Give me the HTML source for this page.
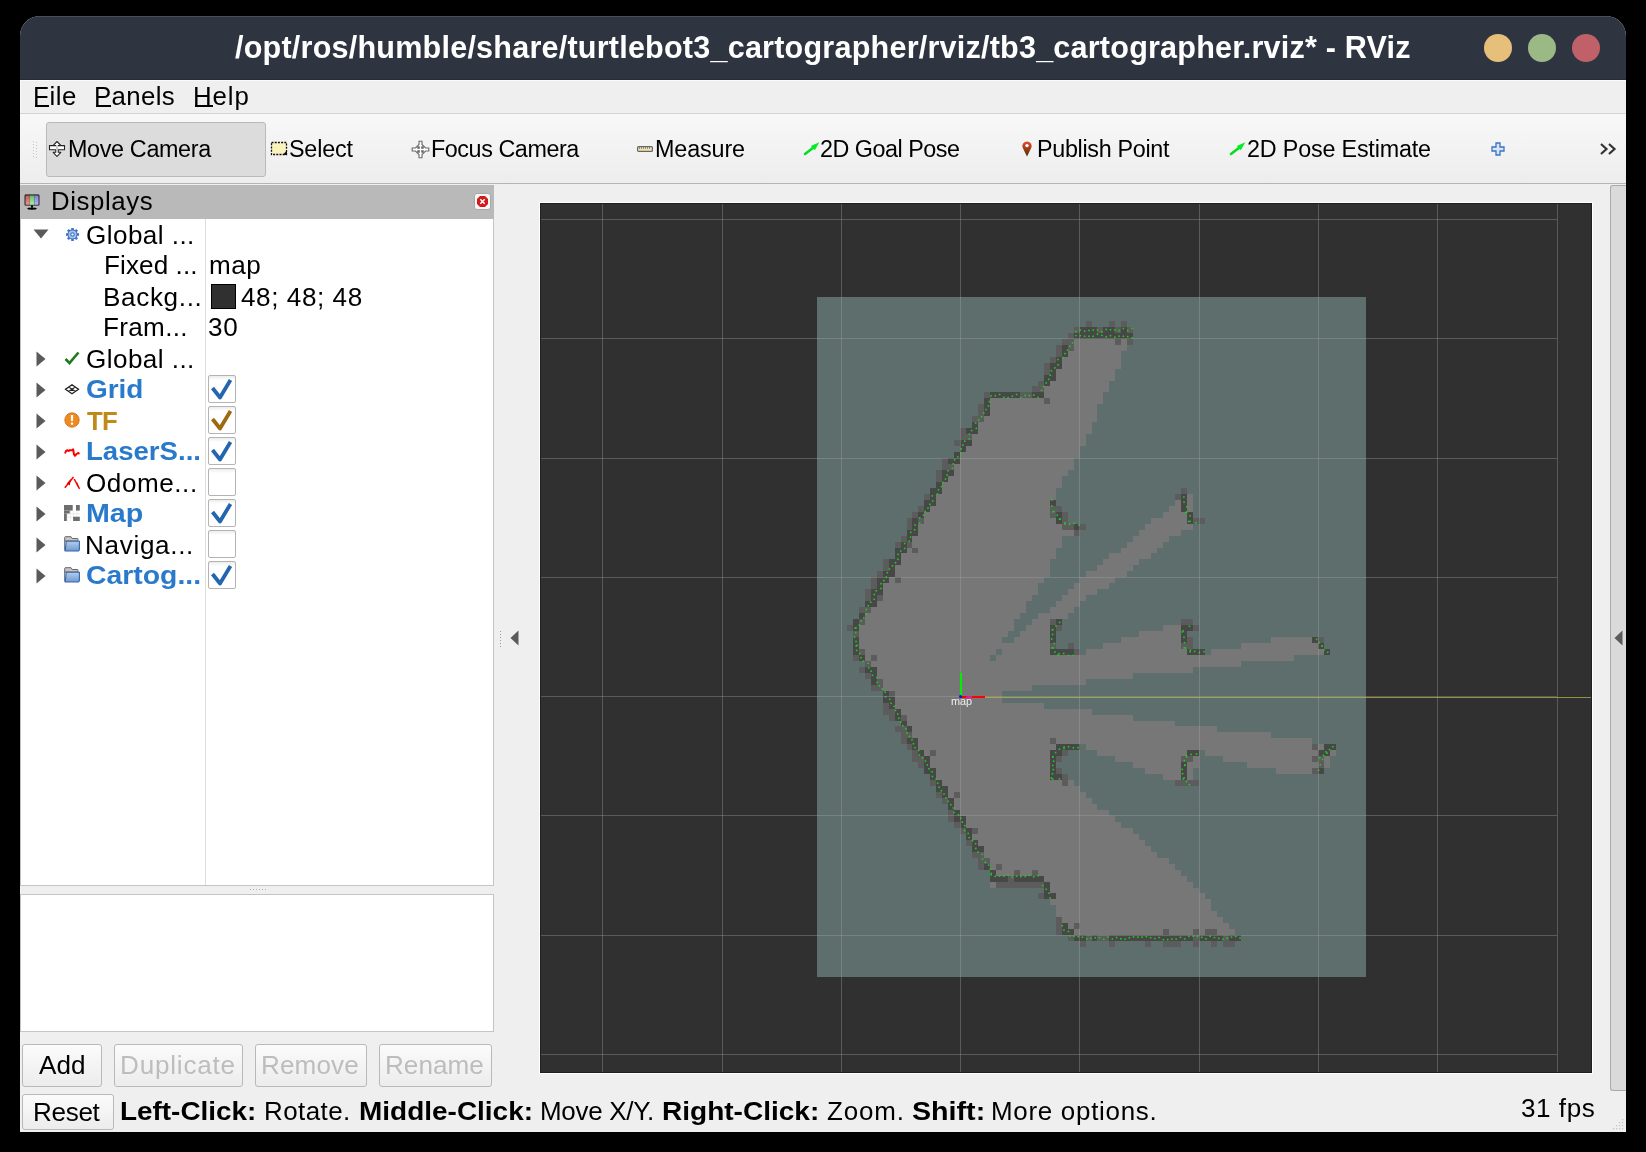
<!DOCTYPE html>
<html><head><meta charset="utf-8">
<style>
*{margin:0;padding:0;box-sizing:border-box}
html,body{width:1646px;height:1152px;background:#000;overflow:hidden;font-family:"Liberation Sans",sans-serif}
.a{position:absolute}
.t{position:absolute;white-space:nowrap;line-height:1;-webkit-font-smoothing:antialiased;will-change:transform}
</style></head><body>
<div class="a" style="left:20px;top:16px;width:1606px;height:1116px;background:#efefef;border-radius:20px 20px 0 0;overflow:hidden">
<div class="a" style="left:0;top:0;width:1606px;height:64px;background:#2e3440;border-top:1px solid #4a4e5a;border-bottom:1px solid #282c36"></div>
<div class="a" style="left:0;top:64px;width:1606px;height:1px;background:#fafafa"></div>
<div class="a" style="left:0;top:64px;width:1px;height:100px;background:linear-gradient(#fafafa,#efefef)"></div>
</div>
<div class="t" style="left:235.00px;top:32px;font-size:30.57px;letter-spacing:0.212px;color:#fff;font-weight:bold;">/opt/ros/humble/share/turtlebot3_cartographer/rviz/tb3_cartographer.rviz* - RViz</div>
<div class="a" style="left:1483.9px;top:34px;width:28px;height:28px;border-radius:50%;background:#e6c07a"></div>
<div class="a" style="left:1528px;top:34px;width:28px;height:28px;border-radius:50%;background:#9bb985"></div>
<div class="a" style="left:1572px;top:34px;width:28px;height:28px;border-radius:50%;background:#c0616a"></div>
<div class="a" style="left:20px;top:113px;width:1606px;height:1px;background:#d4d4d4"></div>
<div class="a" style="left:20px;top:114px;width:1606px;height:69px;background:linear-gradient(#f8f8f8,#ededed)"></div>
<div class="a" style="left:20px;top:183px;width:1606px;height:1px;background:#b4b4b4"></div>
<div class="t" style="left:33.20px;top:84px;font-size:25.8px;letter-spacing:0.632px;color:#000;">File</div>
<div class="t" style="left:94.20px;top:84px;font-size:25.8px;letter-spacing:0.372px;color:#000;">Panels</div>
<div class="t" style="left:193.30px;top:84px;font-size:25.8px;letter-spacing:0.939px;color:#000;">Help</div>
<div class="a" style="left:35px;top:105px;width:14px;height:2px;background:#000"></div>
<div class="a" style="left:96px;top:105px;width:15px;height:2px;background:#000"></div>
<div class="a" style="left:195px;top:105px;width:18px;height:2px;background:#000"></div>
<div class="a" style="left:33px;top:141px;width:1px;height:16px;background:repeating-linear-gradient(#c4c4c4 0 1px,transparent 1px 3px)"></div>
<div class="a" style="left:36px;top:142px;width:1px;height:16px;background:repeating-linear-gradient(#c4c4c4 0 1px,transparent 1px 3px)"></div>
<div class="a" style="left:46px;top:122px;width:220px;height:55px;background:#dcdcdc;border:1px solid #b9b9b9;border-radius:3px"></div>
<div class="t" style="left:67.60px;top:138px;font-size:23.33px;letter-spacing:-0.332px;color:#000;">Move Camera</div>
<div class="t" style="left:289.00px;top:138px;font-size:23.33px;letter-spacing:-0.191px;color:#000;">Select</div>
<div class="t" style="left:430.90px;top:138px;font-size:23.33px;letter-spacing:-0.428px;color:#000;">Focus Camera</div>
<div class="t" style="left:654.50px;top:138px;font-size:23.33px;letter-spacing:-0.115px;color:#000;">Measure</div>
<div class="t" style="left:820.40px;top:138px;font-size:23.33px;letter-spacing:-0.487px;color:#000;">2D Goal Pose</div>
<div class="t" style="left:1037.00px;top:138px;font-size:23.33px;letter-spacing:-0.307px;color:#000;">Publish Point</div>
<div class="t" style="left:1247.00px;top:138px;font-size:23.33px;letter-spacing:-0.182px;color:#000;">2D Pose Estimate</div>
<svg class="a" style="left:48px;top:140px" width="18" height="18" viewBox="0 0 18 18">
<path d="M9 1.5 L13.2 5.8 L10.2 5.8 L10.2 5.6 L16.5 5.6 L16.5 9.8 L10.2 9.8 L10.2 12.3 L12.8 12.3 L9 16.5 L5.2 12.3 L7.8 12.3 L7.8 9.8 L1.5 9.8 L1.5 5.6 L7.8 5.6 L7.8 5.8 L4.8 5.8 Z" fill="#fff" stroke="#222" stroke-width="1.1" stroke-linejoin="round"/>
<rect x="8.2" y="6" width="1.6" height="6" fill="#bdbdbd"/></svg>
<svg class="a" style="left:270px;top:141px" width="18" height="15" viewBox="0 0 18 15"><rect x="1.5" y="1.5" width="15" height="12" fill="#faf3bd" stroke="#111" stroke-width="1.3" stroke-dasharray="2 1.2"/><path d="M17 9.5 V14 H12.5 Z" fill="#111"/></svg>
<svg class="a" style="left:411px;top:140px" width="19" height="19" viewBox="0 0 19 19">
<path d="M8 1.2 H11 V4.5 L14.5 8 H17.8 V11 H14.5 L11 14.5 V17.8 H8 V14.5 L4.5 11 H1.2 V8 H4.5 L8 4.5 Z" fill="#fff" stroke="#6a6a6a" stroke-width="1.1"/><g fill="#666"><rect x="6.3" y="6.3" width="2.5" height="2.5"/><rect x="10.2" y="6.3" width="2.5" height="2.5"/><rect x="6.3" y="10.2" width="2.5" height="2.5"/><rect x="10.2" y="10.2" width="2.5" height="2.5"/></g></svg>
<svg class="a" style="left:637px;top:146px" width="16" height="6" viewBox="0 0 16 6"><rect x="0.6" y="0.6" width="14.8" height="4.8" rx="1" fill="#efe6b0" stroke="#666" stroke-width="1.2"/><path d="M2.5 1 V3 M4.5 1 V3 M6.5 1 V3 M8.5 1 V3 M10.5 1 V3 M12.5 1 V3" stroke="#777" stroke-width="0.8"/></svg>
<svg class="a" style="left:802.5px;top:141px" width="17" height="15" viewBox="0 0 17 15"><path d="M2 13 L10.5 6.5" stroke="#00e020" stroke-width="2.6" stroke-linecap="round"/><path d="M16.3 1.2 L7.8 5 L11.8 9.2 Z" fill="#00ee22"/></svg>
<svg class="a" style="left:1228.5px;top:141px" width="17" height="15" viewBox="0 0 17 15"><path d="M2 13 L10.5 6.5" stroke="#00e020" stroke-width="2.6" stroke-linecap="round"/><path d="M16.3 1.2 L7.8 5 L11.8 9.2 Z" fill="#00ee22"/></svg>
<svg class="a" style="left:1022px;top:141px" width="10" height="16" viewBox="0 0 10 16"><defs><linearGradient id="pg" x1="0" y1="0" x2="0" y2="1"><stop offset="0" stop-color="#ea4a2a"/><stop offset="1" stop-color="#4a3200"/></linearGradient></defs><path d="M5 15.5 L0.8 7 A4.6 4.6 0 1 1 9.2 7 Z" fill="url(#pg)"/><circle cx="5" cy="4.6" r="1.7" fill="#fff"/></svg>
<svg class="a" style="left:1491px;top:142px" width="14" height="14" viewBox="0 0 14 14"><path d="M5 1 H9 V5 H13 V9 H9 V13 H5 V9 H1 V5 H5 Z" fill="#d8e6f7" stroke="#3b73c0" stroke-width="1.3"/></svg>
<svg class="a" style="left:1598px;top:141px" width="22" height="16" viewBox="0 0 22 16"><path d="M3 3 L8.5 8 L3 13 M11 3 L16.5 8 L11 13" fill="none" stroke="#333" stroke-width="2.2"/></svg>
<div class="a" style="left:20px;top:185px;width:474px;height:34px;background:#b9b9b9"></div>
<div class="t" style="left:51.20px;top:189px;font-size:25.8px;letter-spacing:0.581px;color:#000;">Displays</div>
<svg class="a" style="left:24px;top:194px" width="16" height="16" viewBox="0 0 16 16"><defs><linearGradient id="dr" x1="0" y1="0" x2="0" y2="1"><stop offset="0" stop-color="#b86060"/><stop offset="1" stop-color="#f09090"/></linearGradient><linearGradient id="dg" x1="0" y1="0" x2="0" y2="1"><stop offset="0" stop-color="#6ab86a"/><stop offset="1" stop-color="#a8f0a0"/></linearGradient><linearGradient id="db" x1="0" y1="0" x2="0" y2="1"><stop offset="0" stop-color="#8080d8"/><stop offset="1" stop-color="#b4b4ff"/></linearGradient></defs>
<rect x="0.6" y="0.6" width="14.8" height="11" rx="1.2" fill="#000"/><rect x="1.4" y="1.4" width="4.4" height="9.4" fill="url(#dr)"/><rect x="5.8" y="1.4" width="4.8" height="9.4" fill="url(#dg)"/><rect x="10.6" y="1.4" width="4" height="9.4" fill="url(#db)"/>
<rect x="7" y="11.5" width="2" height="2" fill="#000"/><ellipse cx="8" cy="14.6" rx="4.8" ry="1.2" fill="#000"/></svg>
<div class="a" style="left:474px;top:193px;width:17px;height:17px;background:#f7f7f7;border:1px solid #a8a8a8;border-radius:3px"></div>
<svg class="a" style="left:476px;top:195px" width="13" height="13" viewBox="0 0 13 13"><path d="M4 1 H9 L12 4 V9 L9 12 H4 L1 9 V4 Z" fill="#d21a1a"/><path d="M4.3 4.3 L8.7 8.7 M8.7 4.3 L4.3 8.7" stroke="#fff" stroke-width="1.5"/></svg>
<div class="a" style="left:20px;top:219px;width:474px;height:667px;background:#fff;border:1px solid #c4c4c4;border-top:none"></div>
<div class="a" style="left:205px;top:219px;width:1px;height:666px;background:#dcdcdc"></div>
<div class="t" style="left:85.90px;top:222px;font-size:26.09px;letter-spacing:0.442px;color:#000;">Global ...</div>
<div class="a" style="left:64px;top:226px;width:16px;height:16px"><svg width="16" height="16" viewBox="0 0 16 16"><g fill="#3d72c4"><circle cx="8.5" cy="8.5" r="5"/><rect x="7.2" y="2" width="2.6" height="13"/><rect x="2" y="7.2" width="13" height="2.6"/><rect x="7.2" y="2" width="2.6" height="13" transform="rotate(45 8.5 8.5)"/><rect x="7.2" y="2" width="2.6" height="13" transform="rotate(-45 8.5 8.5)"/></g><circle cx="8.5" cy="8.5" r="4" fill="#a9c3e8"/><circle cx="8.5" cy="8.5" r="2.3" fill="#4a7cc8"/><circle cx="8.5" cy="8.5" r="1.1" fill="#fff"/></svg></div>
<svg class="a" style="left:33px;top:229px" width="16" height="10" viewBox="0 0 16 10"><path d="M0.5 0.5 H15.5 L8 9.5 Z" fill="#5a5a5a"/></svg>
<div class="t" style="left:103.70px;top:252px;font-size:26.09px;letter-spacing:0.099px;color:#000;">Fixed ...</div>
<div class="t" style="left:103.00px;top:284px;font-size:26.09px;letter-spacing:0.661px;color:#000;">Backg...</div>
<div class="t" style="left:103.00px;top:314px;font-size:26.09px;letter-spacing:0.328px;color:#000;">Fram...</div>
<div class="t" style="left:85.90px;top:346px;font-size:26.09px;letter-spacing:0.442px;color:#000;">Global ...</div>
<div class="a" style="left:64px;top:350px;width:16px;height:16px"><svg width="16" height="16" viewBox="0 0 16 16"><path d="M1.5 9 L5.5 13 L14.5 2.5" fill="none" stroke="#1d7a1d" stroke-width="2.6"/></svg></div>
<svg class="a" style="left:36px;top:351px" width="10" height="16" viewBox="0 0 10 16"><path d="M0.5 0.5 V15.5 L9.5 8 Z" fill="#5a5a5a"/></svg>
<div class="t" style="left:85.90px;top:377px;font-size:25.71px;transform:scaleX(1.087);transform-origin:0 0;color:#2a7acb;font-weight:bold;">Grid</div>
<div class="a" style="left:64px;top:381px;width:16px;height:16px"><svg width="16" height="16" viewBox="0 0 16 16"><path d="M8 3.8 L14.5 8.3 L8 12.8 L1.5 8.3 Z M4.75 6.05 L11.25 10.55 M11.25 6.05 L4.75 10.55" fill="none" stroke="#222" stroke-width="1.3"/></svg></div>
<svg class="a" style="left:36px;top:382px" width="10" height="16" viewBox="0 0 10 16"><path d="M0.5 0.5 V15.5 L9.5 8 Z" fill="#5a5a5a"/></svg>
<div class="a" style="left:208px;top:375px;width:28px;height:28px;border:1px solid #b4b4b4;border-radius:2px;background:linear-gradient(#ececec,#fff 4px)"></div>
<svg class="a" style="left:208px;top:375px" width="28" height="28" viewBox="0 0 28 28"><path d="M4.5 13 L12 22.5 L22.5 5" fill="none" stroke="#2365ae" stroke-width="3.8" stroke-linejoin="round"/></svg>
<div class="t" style="left:86.90px;top:409px;font-size:25.71px;letter-spacing:-0.601px;color:#c08a1a;font-weight:bold;">TF</div>
<div class="a" style="left:64px;top:412px;width:16px;height:16px"><svg width="16" height="16" viewBox="0 0 16 16"><circle cx="8" cy="8" r="7.2" fill="#f0891e" stroke="#c86a10" stroke-width="0.8"/><rect x="6.9" y="3" width="2.2" height="6" fill="#fff"/><rect x="6.9" y="10.5" width="2.2" height="2.2" fill="#fff"/></svg></div>
<svg class="a" style="left:36px;top:413px" width="10" height="16" viewBox="0 0 10 16"><path d="M0.5 0.5 V15.5 L9.5 8 Z" fill="#5a5a5a"/></svg>
<div class="a" style="left:208px;top:406px;width:28px;height:28px;border:1px solid #b4b4b4;border-radius:2px;background:linear-gradient(#ececec,#fff 4px)"></div>
<svg class="a" style="left:208px;top:406px" width="28" height="28" viewBox="0 0 28 28"><path d="M4.5 13 L12 22.5 L22.5 5" fill="none" stroke="#9b6b0e" stroke-width="3.8" stroke-linejoin="round"/></svg>
<div class="t" style="left:85.90px;top:439px;font-size:25.71px;transform:scaleX(1.0732);transform-origin:0 0;color:#2a7acb;font-weight:bold;">LaserS...</div>
<div class="a" style="left:64px;top:443px;width:16px;height:16px"><svg width="16" height="16" viewBox="0 0 16 16"><path d="M1 10.5 L2 8 L3.5 7.2 L4.5 8 L6 7.2 L8 7.2 L9.2 6.3 L10 11.5 L11 12.8 L12.5 11 L14 10 L15.5 10.8" fill="none" stroke="#ff0000" stroke-width="2" stroke-linejoin="round"/></svg></div>
<svg class="a" style="left:36px;top:444px" width="10" height="16" viewBox="0 0 10 16"><path d="M0.5 0.5 V15.5 L9.5 8 Z" fill="#5a5a5a"/></svg>
<div class="a" style="left:208px;top:437px;width:28px;height:28px;border:1px solid #b4b4b4;border-radius:2px;background:linear-gradient(#ececec,#fff 4px)"></div>
<svg class="a" style="left:208px;top:437px" width="28" height="28" viewBox="0 0 28 28"><path d="M4.5 13 L12 22.5 L22.5 5" fill="none" stroke="#2365ae" stroke-width="3.8" stroke-linejoin="round"/></svg>
<div class="t" style="left:85.90px;top:470px;font-size:26.09px;letter-spacing:0.556px;color:#000;">Odome...</div>
<div class="a" style="left:64px;top:474px;width:16px;height:16px"><svg width="16" height="16" viewBox="0 0 16 16"><path d="M0.8 13.8 L9.5 3 M10.2 5 L15.5 14.8" fill="none" stroke="#ff0000" stroke-width="1.5"/><path d="M7 4.8 L2.8 9.6 L5.8 11.4 Z M12.2 9.2 L15.8 15.6 L13.4 8.4 Z" fill="#e00000"/></svg></div>
<svg class="a" style="left:36px;top:475px" width="10" height="16" viewBox="0 0 10 16"><path d="M0.5 0.5 V15.5 L9.5 8 Z" fill="#5a5a5a"/></svg>
<div class="a" style="left:208px;top:468px;width:28px;height:28px;border:1px solid #b4b4b4;border-radius:2px;background:linear-gradient(#ececec,#fff 4px)"></div>
<div class="t" style="left:85.90px;top:501px;font-size:25.71px;transform:scaleX(1.1146);transform-origin:0 0;color:#2a7acb;font-weight:bold;">Map</div>
<div class="a" style="left:64px;top:505px;width:16px;height:16px"><svg width="16" height="16" viewBox="0 0 16 16"><rect x="0" y="0" width="16" height="16" fill="#fff"/><path d="M3.2 6 V16 M6.4 6 V16 M9.6 6 V16 M12.8 6 V16 M0 8.8 H16 M0 12 H16" stroke="#ddd" stroke-width="0.6"/><g fill="#6e6e6e"><rect x="0" y="0" width="8.7" height="5.6"/><rect x="0" y="5.6" width="5.8" height="2.9"/><rect x="0" y="8.5" width="2.8" height="7.5"/><rect x="12" y="0" width="3.8" height="5.6"/><rect x="9.1" y="11.8" width="6.7" height="4.2"/></g></svg></div>
<svg class="a" style="left:36px;top:506px" width="10" height="16" viewBox="0 0 10 16"><path d="M0.5 0.5 V15.5 L9.5 8 Z" fill="#5a5a5a"/></svg>
<div class="a" style="left:208px;top:499px;width:28px;height:28px;border:1px solid #b4b4b4;border-radius:2px;background:linear-gradient(#ececec,#fff 4px)"></div>
<svg class="a" style="left:208px;top:499px" width="28" height="28" viewBox="0 0 28 28"><path d="M4.5 13 L12 22.5 L22.5 5" fill="none" stroke="#2365ae" stroke-width="3.8" stroke-linejoin="round"/></svg>
<div class="t" style="left:84.90px;top:532px;font-size:26.09px;letter-spacing:0.679px;color:#000;">Naviga...</div>
<div class="a" style="left:64px;top:536px;width:16px;height:16px"><svg width="16" height="16" viewBox="0 0 16 16"><defs><linearGradient id="fb" x1="0" y1="0" x2="0" y2="1"><stop offset="0" stop-color="#b6cdec"/><stop offset="1" stop-color="#6d9ad4"/></linearGradient></defs><path d="M0.7 14.5 V1.5 Q0.7 0.7 1.5 0.7 H7 L8.3 2.5 H13.5 Q14 2.5 14 3.2 V5 H0.7" fill="#c4c4c4" stroke="#666" stroke-width="1"/><path d="M2.2 5.2 H15.4 V13.8 L14.5 15 H1.2 Z" fill="url(#fb)" stroke="#3465aa" stroke-width="1.1"/></svg></div>
<svg class="a" style="left:36px;top:537px" width="10" height="16" viewBox="0 0 10 16"><path d="M0.5 0.5 V15.5 L9.5 8 Z" fill="#5a5a5a"/></svg>
<div class="a" style="left:208px;top:530px;width:28px;height:28px;border:1px solid #b4b4b4;border-radius:2px;background:linear-gradient(#ececec,#fff 4px)"></div>
<div class="t" style="left:85.90px;top:563px;font-size:25.71px;transform:scaleX(1.1038);transform-origin:0 0;color:#2a7acb;font-weight:bold;">Cartog...</div>
<div class="a" style="left:64px;top:567px;width:16px;height:16px"><svg width="16" height="16" viewBox="0 0 16 16"><defs><linearGradient id="fb" x1="0" y1="0" x2="0" y2="1"><stop offset="0" stop-color="#b6cdec"/><stop offset="1" stop-color="#6d9ad4"/></linearGradient></defs><path d="M0.7 14.5 V1.5 Q0.7 0.7 1.5 0.7 H7 L8.3 2.5 H13.5 Q14 2.5 14 3.2 V5 H0.7" fill="#c4c4c4" stroke="#666" stroke-width="1"/><path d="M2.2 5.2 H15.4 V13.8 L14.5 15 H1.2 Z" fill="url(#fb)" stroke="#3465aa" stroke-width="1.1"/></svg></div>
<svg class="a" style="left:36px;top:568px" width="10" height="16" viewBox="0 0 10 16"><path d="M0.5 0.5 V15.5 L9.5 8 Z" fill="#5a5a5a"/></svg>
<div class="a" style="left:208px;top:561px;width:28px;height:28px;border:1px solid #b4b4b4;border-radius:2px;background:linear-gradient(#ececec,#fff 4px)"></div>
<svg class="a" style="left:208px;top:561px" width="28" height="28" viewBox="0 0 28 28"><path d="M4.5 13 L12 22.5 L22.5 5" fill="none" stroke="#2365ae" stroke-width="3.8" stroke-linejoin="round"/></svg>
<div class="t" style="left:208.70px;top:252px;font-size:26.09px;letter-spacing:0.537px;color:#000;">map</div>
<div class="a" style="left:211px;top:284px;width:25px;height:25px;background:#303030;border:1px solid #000"></div>
<div class="t" style="left:240.80px;top:284px;font-size:26.09px;letter-spacing:0.578px;color:#000;">48; 48; 48</div>
<div class="t" style="left:208.00px;top:314px;font-size:26.09px;letter-spacing:0.797px;color:#000;">30</div>
<div class="a" style="left:250px;top:889px;width:18px;height:1px;background:repeating-linear-gradient(90deg,#b0b0b0 0 1px,transparent 1px 3px)"></div>
<div class="a" style="left:20px;top:894px;width:474px;height:138px;background:#fff;border:1px solid #c4c4c4"></div>
<div class="a" style="left:22px;top:1044px;width:80px;height:43px;border:1px solid #b9b9b9;border-radius:3px;background:linear-gradient(#fbfbfb,#ececec)"></div>
<div class="a" style="left:114px;top:1044px;width:129px;height:43px;border:1px solid #b9b9b9;border-radius:3px;background:linear-gradient(#fbfbfb,#ececec)"></div>
<div class="a" style="left:255px;top:1044px;width:112px;height:43px;border:1px solid #b9b9b9;border-radius:3px;background:linear-gradient(#fbfbfb,#ececec)"></div>
<div class="a" style="left:379px;top:1044px;width:113px;height:43px;border:1px solid #b9b9b9;border-radius:3px;background:linear-gradient(#fbfbfb,#ececec)"></div>
<div class="t" style="left:39.40px;top:1052px;font-size:26.09px;letter-spacing:0.001px;color:#000;">Add</div>
<div class="t" style="left:120.00px;top:1052px;font-size:26.09px;letter-spacing:0.798px;color:#bdbdbd;">Duplicate</div>
<div class="t" style="left:261.40px;top:1052px;font-size:26.09px;letter-spacing:0.12px;color:#bdbdbd;">Remove</div>
<div class="t" style="left:385.10px;top:1052px;font-size:26.09px;letter-spacing:0.027px;color:#bdbdbd;">Rename</div>
<div class="a" style="left:22px;top:1094px;width:92px;height:36px;border:1px solid #b9b9b9;border-radius:3px;background:linear-gradient(#fbfbfb,#ececec)"></div>
<div class="t" style="left:33.10px;top:1099px;font-size:26.09px;letter-spacing:-0.32px;color:#000;">Reset</div>
<div class="t" style="left:1521.30px;top:1095px;font-size:26.09px;letter-spacing:0.54px;color:#000;">31 fps</div>
<div class="t" style="left:120.40px;top:1099px;font-size:25.57px;transform:scaleX(1.0909);transform-origin:0 0;color:#000;font-weight:bold;">Left-Click:</div>
<div class="t" style="left:264.40px;top:1099px;font-size:25.94px;letter-spacing:0.447px;color:#000;">Rotate.</div>
<div class="t" style="left:359.00px;top:1099px;font-size:25.57px;transform:scaleX(1.0942);transform-origin:0 0;color:#000;font-weight:bold;">Middle-Click:</div>
<div class="t" style="left:539.80px;top:1099px;font-size:25.94px;letter-spacing:-0.262px;color:#000;">Move X/Y.</div>
<div class="t" style="left:662.00px;top:1099px;font-size:25.57px;transform:scaleX(1.0964);transform-origin:0 0;color:#000;font-weight:bold;">Right-Click:</div>
<div class="t" style="left:827.00px;top:1099px;font-size:25.94px;letter-spacing:0.85px;color:#000;">Zoom.</div>
<div class="t" style="left:911.50px;top:1099px;font-size:25.57px;transform:scaleX(1.1208);transform-origin:0 0;color:#000;font-weight:bold;">Shift:</div>
<div class="t" style="left:991.00px;top:1099px;font-size:25.94px;letter-spacing:0.713px;color:#000;">More options.</div>
<div class="a" style="left:500px;top:631px;width:1px;height:17px;background:repeating-linear-gradient(#9a9a9a 0 1px,transparent 1px 3px)"></div>
<svg class="a" style="left:510px;top:630px" width="9" height="16" viewBox="0 0 9 16"><path d="M8.5 0.5 V15.5 L0.5 8 Z" fill="#5a5a5a"/></svg>
<svg class="a" style="left:1612px;top:1118px" width="13" height="13" viewBox="0 0 13 13"><g fill="#c4c4c4"><rect x="10" y="1" width="1.2" height="1.2"/><rect x="7" y="4" width="1.2" height="1.2"/><rect x="10" y="4" width="1.2" height="1.2"/><rect x="4" y="7" width="1.2" height="1.2"/><rect x="7" y="7" width="1.2" height="1.2"/><rect x="10" y="7" width="1.2" height="1.2"/><rect x="1" y="10" width="1.2" height="1.2"/><rect x="4" y="10" width="1.2" height="1.2"/><rect x="7" y="10" width="1.2" height="1.2"/><rect x="10" y="10" width="1.2" height="1.2"/></g></svg>
<div class="a" style="left:1610px;top:185px;width:16px;height:906px;background:#dadada;border:1px solid #a9a9a9;border-right:none;border-radius:3px 0 0 3px"></div>
<svg class="a" style="left:1614px;top:630px" width="9" height="16" viewBox="0 0 9 16"><path d="M8.5 0.5 V15.5 L0.5 8 Z" fill="#5a5a5a"/></svg>
<div class="a" style="left:539px;top:202px;width:1054px;height:872px;background:#fff"></div>
<div class="a" style="left:540px;top:203px;width:1052px;height:870px;background:#303030;overflow:hidden"></div>
<svg class="a" style="left:817px;top:297px" width="549.00" height="680.00" viewBox="0 0 92 114" preserveAspectRatio="none" shape-rendering="crispEdges">
<rect width="92" height="114" fill="#5d6e6c"/>
<path fill="#777777" d="M43 7h7v1h-7zM51 7h1v1h-1zM43 8h9v1h-9zM42 9h9v1h-9zM41 10h10v1h-10zM41 11h10v1h-10zM40 12h10v1h-10zM40 13h10v1h-10zM39 14h10v1h-10zM38 15h11v1h-11zM38 16h10v1h-10zM29 17h9v1h-9zM39 17h9v1h-9zM29 18h18v1h-18zM29 19h18v1h-18zM28 20h19v1h-19zM27 21h19v1h-19zM27 22h19v1h-19zM26 23h19v1h-19zM26 24h19v1h-19zM25 25h19v1h-19zM24 26h20v1h-20zM24 27h19v1h-19zM23 28h20v1h-20zM23 29h19v1h-19zM22 30h19v1h-19zM21 31h20v1h-20zM21 32h19v1h-19zM20 33h20v1h-20zM62 33h1v1h-1zM20 34h19v1h-19zM60 34h1v1h-1zM62 34h1v1h-1zM19 35h20v1h-20zM59 35h2v1h-2zM62 35h1v1h-1zM18 36h21v1h-21zM58 36h4v1h-4zM18 37h22v1h-22zM56 37h6v1h-6zM17 38h24v1h-24zM55 38h8v1h-8zM17 39h26v1h-26zM54 39h7v1h-7zM16 40h25v1h-25zM53 40h6v1h-6zM16 41h25v1h-25zM52 41h6v1h-6zM15 42h1v1h-1zM17 42h23v1h-23zM51 42h6v1h-6zM14 43h26v1h-26zM49 43h7v1h-7zM14 44h25v1h-25zM48 44h6v1h-6zM13 45h26v1h-26zM47 45h6v1h-6zM13 46h26v1h-26zM45 46h7v1h-7zM12 47h1v1h-1zM14 47h24v1h-24zM44 47h6v1h-6zM11 48h26v1h-26zM43 48h6v1h-6zM11 49h26v1h-26zM42 49h5v1h-5zM11 50h25v1h-25zM41 50h4v1h-4zM10 51h25v1h-25zM40 51h4v1h-4zM9 52h26v1h-26zM39 52h4v1h-4zM8 53h26v1h-26zM37 53h5v1h-5zM8 54h25v1h-25zM36 54h3v1h-3zM7 55h26v1h-26zM35 55h4v1h-4zM58 55h3v1h-3zM7 56h25v1h-25zM34 56h5v1h-5zM54 56h7v1h-7zM7 57h24v1h-24zM33 57h6v1h-6zM51 57h10v1h-10zM76 57h7v1h-7zM7 58h32v1h-32zM48 58h13v1h-13zM71 58h13v1h-13zM8 59h22v1h-22zM31 59h8v1h-8zM45 59h17v1h-17zM66 59h19v1h-19zM8 60h1v1h-1zM10 60h19v1h-19zM30 60h50v1h-50zM9 61h62v1h-62zM10 62h53v1h-53zM10 63h43v1h-43zM11 64h34v1h-34zM11 65h25v1h-25zM13 66h18v1h-18zM13 67h18v1h-18zM13 68h25v1h-25zM14 69h32v1h-32zM15 70h38v1h-38zM15 71h45v1h-45zM16 72h51v1h-51zM16 73h60v1h-60zM17 74h22v1h-22zM40 74h43v1h-43zM17 75h23v1h-23zM45 75h38v1h-38zM84 75h1v1h-1zM18 76h1v1h-1zM20 76h19v1h-19zM47 76h15v1h-15zM65 76h19v1h-19zM86 76h1v1h-1zM19 77h20v1h-20zM50 77h11v1h-11zM63 77h1v1h-1zM68 77h15v1h-15zM85 77h1v1h-1zM19 78h20v1h-20zM53 78h8v1h-8zM62 78h2v1h-2zM72 78h12v1h-12zM85 78h1v1h-1zM20 79h19v1h-19zM55 79h6v1h-6zM62 79h1v1h-1zM77 79h6v1h-6zM20 80h19v1h-19zM58 80h3v1h-3zM62 80h1v1h-1zM21 81h20v1h-20zM42 81h1v1h-1zM22 82h22v1h-22zM22 83h1v1h-1zM24 83h21v1h-21zM23 84h23v1h-23zM23 85h24v1h-24zM24 86h25v1h-25zM25 87h25v1h-25zM25 88h26v1h-26zM27 89h26v1h-26zM26 90h28v1h-28zM27 91h28v1h-28zM28 92h28v1h-28zM28 93h29v1h-29zM29 94h30v1h-30zM29 95h1v1h-1zM31 95h29v1h-29zM30 96h3v1h-3zM34 96h2v1h-2zM37 96h24v1h-24zM38 97h24v1h-24zM29 98h1v1h-1zM39 98h24v1h-24zM39 99h25v1h-25zM40 100h25v1h-25zM39 101h27v1h-27zM40 102h26v1h-26zM40 103h27v1h-27zM41 104h27v1h-27zM42 105h1v1h-1zM44 105h25v1h-25zM43 106h15v1h-15zM59 106h4v1h-4zM64 106h1v1h-1zM67 106h3v1h-3z"/>
<path fill="#5c5c5c" d="M45 4h1v1h-1zM49 4h1v1h-1zM51 4h1v1h-1zM43 5h1v1h-1zM47 5h1v1h-1zM50 5h1v1h-1zM52 5h1v1h-1zM42 6h1v1h-1zM41 7h2v1h-2zM50 7h1v1h-1zM52 7h1v1h-1zM40 8h1v1h-1zM42 8h1v1h-1zM40 9h1v1h-1zM39 10h1v1h-1zM38 11h1v1h-1zM38 12h1v1h-1zM37 14h1v1h-1zM36 15h2v1h-2zM28 16h1v1h-1zM34 16h2v1h-2zM38 17h1v1h-1zM27 18h1v1h-1zM27 19h1v1h-1zM26 20h2v1h-2zM24 22h1v1h-1zM24 23h2v1h-2zM23 24h1v1h-1zM21 27h1v1h-1zM21 28h2v1h-2zM20 29h1v1h-1zM20 30h1v1h-1zM61 32h1v1h-1zM18 33h1v1h-1zM60 33h1v1h-1zM17 35h1v1h-1zM39 35h2v1h-2zM16 36h1v1h-1zM39 36h1v1h-1zM41 36h1v1h-1zM15 37h1v1h-1zM17 37h1v1h-1zM41 37h1v1h-1zM63 37h2v1h-2zM15 38h1v1h-1zM41 38h2v1h-2zM44 38h1v1h-1zM43 39h1v1h-1zM14 40h1v1h-1zM13 41h1v1h-1zM15 41h1v1h-1zM16 42h1v1h-1zM11 44h1v1h-1zM11 45h1v1h-1zM10 46h1v1h-1zM9 47h1v1h-1zM13 47h1v1h-1zM9 48h1v1h-1zM8 49h1v1h-1zM8 50h1v1h-1zM10 50h1v1h-1zM7 52h2v1h-2zM7 54h1v1h-1zM39 54h1v1h-1zM61 54h2v1h-2zM5 55h1v1h-1zM40 55h1v1h-1zM63 55h1v1h-1zM6 56h1v1h-1zM62 57h1v1h-1zM84 57h1v1h-1zM39 58h1v1h-1zM42 58h1v1h-1zM61 58h2v1h-2zM7 59h1v1h-1zM43 59h1v1h-1zM6 60h1v1h-1zM9 60h1v1h-1zM8 61h1v1h-1zM7 62h1v1h-1zM8 63h1v1h-1zM10 64h1v1h-1zM9 65h2v1h-2zM12 66h1v1h-1zM11 68h1v1h-1zM11 69h2v1h-2zM12 70h1v1h-1zM14 70h1v1h-1zM13 72h2v1h-2zM14 73h2v1h-2zM14 74h1v1h-1zM39 74h1v1h-1zM15 75h1v1h-1zM83 75h1v1h-1zM16 76h1v1h-1zM19 76h1v1h-1zM41 76h1v1h-1zM16 77h2v1h-2zM40 77h1v1h-1zM61 77h2v1h-2zM83 77h2v1h-2zM17 78h1v1h-1zM84 78h1v1h-1zM40 79h1v1h-1zM83 79h1v1h-1zM41 80h1v1h-1zM19 81h1v1h-1zM41 81h1v1h-1zM60 81h4v1h-4zM20 83h1v1h-1zM23 83h1v1h-1zM21 84h1v1h-1zM22 86h1v1h-1zM22 87h1v1h-1zM23 88h1v1h-1zM24 89h1v1h-1zM26 89h1v1h-1zM25 91h1v1h-1zM26 93h2v1h-2zM27 94h2v1h-2zM27 95h1v1h-1zM30 95h1v1h-1zM33 96h1v1h-1zM36 96h1v1h-1zM32 97h1v1h-1zM30 98h8v1h-8zM37 100h1v1h-1zM40 104h1v1h-1zM40 105h1v1h-1zM43 105h1v1h-1zM40 106h1v1h-1zM58 106h1v1h-1zM63 106h1v1h-1zM65 106h2v1h-2zM42 107h1v1h-1zM45 107h1v1h-1zM47 107h2v1h-2zM63 107h1v1h-1zM68 107h1v1h-1zM44 108h1v1h-1zM49 108h1v1h-1zM55 108h1v1h-1zM58 108h3v1h-3zM63 108h1v1h-1zM66 108h1v1h-1zM68 108h2v1h-2z"/>
<path fill="#474747" d="M44 5h3v1h-3zM48 5h2v1h-2zM51 5h1v1h-1zM43 6h10v1h-10zM41 8h1v1h-1zM41 9h1v1h-1zM40 10h1v1h-1zM39 11h2v1h-2zM39 12h1v1h-1zM38 13h2v1h-2zM38 14h1v1h-1zM29 16h5v1h-5zM36 16h2v1h-2zM28 17h1v1h-1zM28 18h1v1h-1zM28 19h1v1h-1zM26 21h1v1h-1zM25 22h2v1h-2zM24 24h2v1h-2zM24 25h1v1h-1zM23 26h1v1h-1zM22 27h2v1h-2zM21 29h2v1h-2zM21 30h1v1h-1zM20 31h1v1h-1zM19 32h2v1h-2zM19 33h1v1h-1zM61 33h1v1h-1zM18 34h2v1h-2zM39 34h1v1h-1zM61 34h1v1h-1zM18 35h1v1h-1zM61 35h1v1h-1zM17 36h1v1h-1zM40 36h1v1h-1zM62 36h1v1h-1zM16 37h1v1h-1zM40 37h1v1h-1zM62 37h1v1h-1zM16 38h1v1h-1zM43 38h1v1h-1zM15 39h2v1h-2zM15 40h1v1h-1zM14 41h1v1h-1zM13 42h2v1h-2zM13 43h1v1h-1zM12 44h2v1h-2zM12 45h1v1h-1zM11 46h2v1h-2zM10 47h2v1h-2zM10 48h1v1h-1zM9 49h2v1h-2zM9 50h1v1h-1zM8 51h2v1h-2zM7 53h1v1h-1zM6 54h1v1h-1zM40 54h1v1h-1zM6 55h1v1h-1zM39 55h1v1h-1zM61 55h2v1h-2zM39 56h1v1h-1zM61 56h1v1h-1zM6 57h1v1h-1zM39 57h1v1h-1zM61 57h1v1h-1zM83 57h1v1h-1zM6 58h1v1h-1zM84 58h1v1h-1zM6 59h1v1h-1zM39 59h4v1h-4zM62 59h3v1h-3zM85 59h1v1h-1zM7 60h1v1h-1zM8 62h2v1h-2zM9 63h1v1h-1zM9 64h1v1h-1zM11 66h1v1h-1zM11 67h2v1h-2zM12 68h1v1h-1zM13 69h1v1h-1zM13 70h1v1h-1zM14 71h1v1h-1zM15 72h1v1h-1zM15 74h2v1h-2zM16 75h1v1h-1zM40 75h4v1h-4zM85 75h2v1h-2zM17 76h1v1h-1zM39 76h2v1h-2zM62 76h2v1h-2zM84 76h2v1h-2zM18 77h1v1h-1zM39 77h1v1h-1zM18 78h1v1h-1zM39 78h1v1h-1zM61 78h1v1h-1zM18 79h2v1h-2zM39 79h1v1h-1zM61 79h1v1h-1zM84 79h1v1h-1zM19 80h1v1h-1zM39 80h2v1h-2zM61 80h1v1h-1zM20 81h1v1h-1zM20 82h2v1h-2zM21 83h1v1h-1zM22 84h1v1h-1zM22 85h1v1h-1zM23 86h1v1h-1zM23 87h2v1h-2zM24 88h1v1h-1zM25 89h1v1h-1zM25 90h1v1h-1zM26 91h1v1h-1zM26 92h2v1h-2zM28 95h1v1h-1zM29 96h1v1h-1zM29 97h3v1h-3zM33 97h5v1h-5zM38 98h1v1h-1zM38 99h1v1h-1zM38 100h2v1h-2zM41 105h1v1h-1zM41 106h2v1h-2zM43 107h2v1h-2zM46 107h1v1h-1zM49 107h14v1h-14zM64 107h4v1h-4zM69 107h2v1h-2z"/>
<g fill="#19d219" shape-rendering="auto"><rect x="43.27" y="5.66" width="0.26" height="0.26"/><rect x="43.99" y="5.41" width="0.26" height="0.26"/><rect x="44.72" y="5.59" width="0.26" height="0.26"/><rect x="45.44" y="5.49" width="0.26" height="0.26"/><rect x="46.16" y="5.41" width="0.26" height="0.26"/><rect x="46.88" y="5.40" width="0.26" height="0.26"/><rect x="47.60" y="5.70" width="0.26" height="0.26"/><rect x="48.33" y="5.31" width="0.26" height="0.26"/><rect x="49.05" y="5.36" width="0.26" height="0.26"/><rect x="49.77" y="5.39" width="0.26" height="0.26"/><rect x="50.49" y="5.49" width="0.26" height="0.26"/><rect x="51.21" y="5.14" width="0.26" height="0.26"/><rect x="51.94" y="5.49" width="0.26" height="0.26"/><rect x="52.66" y="5.13" width="0.26" height="0.26"/><rect x="43.27" y="6.34" width="0.26" height="0.26"/><rect x="43.99" y="6.37" width="0.26" height="0.26"/><rect x="44.72" y="6.45" width="0.26" height="0.26"/><rect x="45.44" y="6.45" width="0.26" height="0.26"/><rect x="46.16" y="6.47" width="0.26" height="0.26"/><rect x="46.88" y="6.12" width="0.26" height="0.26"/><rect x="47.60" y="6.31" width="0.26" height="0.26"/><rect x="48.33" y="6.55" width="0.26" height="0.26"/><rect x="49.05" y="6.36" width="0.26" height="0.26"/><rect x="49.77" y="6.60" width="0.26" height="0.26"/><rect x="50.49" y="6.43" width="0.26" height="0.26"/><rect x="51.21" y="6.45" width="0.26" height="0.26"/><rect x="51.94" y="6.51" width="0.26" height="0.26"/><rect x="52.66" y="6.70" width="0.26" height="0.26"/><rect x="42.69" y="7.57" width="0.26" height="0.26"/><rect x="42.24" y="8.15" width="0.26" height="0.26"/><rect x="41.87" y="8.78" width="0.26" height="0.26"/><rect x="41.42" y="9.36" width="0.26" height="0.26"/><rect x="41.13" y="10.04" width="0.26" height="0.26"/><rect x="40.25" y="10.35" width="0.26" height="0.26"/><rect x="40.29" y="11.24" width="0.26" height="0.26"/><rect x="39.74" y="11.76" width="0.26" height="0.26"/><rect x="39.15" y="12.24" width="0.26" height="0.26"/><rect x="38.97" y="12.99" width="0.26" height="0.26"/><rect x="38.70" y="13.68" width="0.26" height="0.26"/><rect x="38.29" y="14.29" width="0.26" height="0.26"/><rect x="37.83" y="14.87" width="0.26" height="0.26"/><rect x="37.51" y="15.52" width="0.26" height="0.26"/><rect x="29.03" y="16.45" width="0.26" height="0.26"/><rect x="29.74" y="16.41" width="0.26" height="0.26"/><rect x="30.46" y="16.22" width="0.26" height="0.26"/><rect x="31.18" y="16.69" width="0.26" height="0.26"/><rect x="31.89" y="16.75" width="0.26" height="0.26"/><rect x="32.61" y="16.50" width="0.26" height="0.26"/><rect x="33.32" y="16.22" width="0.26" height="0.26"/><rect x="34.04" y="16.71" width="0.26" height="0.26"/><rect x="34.76" y="16.38" width="0.26" height="0.26"/><rect x="35.47" y="16.40" width="0.26" height="0.26"/><rect x="36.19" y="16.32" width="0.26" height="0.26"/><rect x="36.90" y="16.72" width="0.26" height="0.26"/><rect x="28.76" y="17.41" width="0.26" height="0.26"/><rect x="28.60" y="18.14" width="0.26" height="0.26"/><rect x="28.20" y="18.74" width="0.26" height="0.26"/><rect x="27.81" y="19.33" width="0.26" height="0.26"/><rect x="27.47" y="19.95" width="0.26" height="0.26"/><rect x="26.96" y="20.48" width="0.26" height="0.26"/><rect x="26.46" y="21.00" width="0.26" height="0.26"/><rect x="26.56" y="21.89" width="0.26" height="0.26"/><rect x="25.78" y="22.26" width="0.26" height="0.26"/><rect x="25.42" y="22.87" width="0.26" height="0.26"/><rect x="25.38" y="23.67" width="0.26" height="0.26"/><rect x="24.63" y="24.05" width="0.26" height="0.26"/><rect x="24.32" y="24.69" width="0.26" height="0.26"/><rect x="24.04" y="25.35" width="0.26" height="0.26"/><rect x="23.99" y="26.15" width="0.26" height="0.26"/><rect x="23.46" y="26.66" width="0.26" height="0.26"/><rect x="22.93" y="27.17" width="0.26" height="0.26"/><rect x="22.68" y="27.85" width="0.26" height="0.26"/><rect x="22.57" y="28.61" width="0.26" height="0.26"/><rect x="21.84" y="29.00" width="0.26" height="0.26"/><rect x="21.66" y="29.72" width="0.26" height="0.26"/><rect x="21.40" y="30.39" width="0.26" height="0.26"/><rect x="20.97" y="30.96" width="0.26" height="0.26"/><rect x="20.74" y="31.65" width="0.26" height="0.26"/><rect x="20.24" y="32.18" width="0.26" height="0.26"/><rect x="20.06" y="32.90" width="0.26" height="0.26"/><rect x="19.19" y="33.21" width="0.26" height="0.26"/><rect x="19.27" y="34.08" width="0.26" height="0.26"/><rect x="18.80" y="34.63" width="0.26" height="0.26"/><rect x="18.46" y="35.26" width="0.26" height="0.26"/><rect x="18.02" y="35.82" width="0.26" height="0.26"/><rect x="17.72" y="36.47" width="0.26" height="0.26"/><rect x="17.07" y="36.91" width="0.26" height="0.26"/><rect x="17.07" y="37.73" width="0.26" height="0.26"/><rect x="16.29" y="38.10" width="0.26" height="0.26"/><rect x="16.24" y="38.89" width="0.26" height="0.26"/><rect x="15.57" y="39.32" width="0.26" height="0.26"/><rect x="15.55" y="40.13" width="0.26" height="0.26"/><rect x="15.31" y="40.82" width="0.26" height="0.26"/><rect x="14.56" y="41.20" width="0.26" height="0.26"/><rect x="14.55" y="42.02" width="0.26" height="0.26"/><rect x="13.89" y="42.45" width="0.26" height="0.26"/><rect x="13.45" y="43.02" width="0.26" height="0.26"/><rect x="13.43" y="43.84" width="0.26" height="0.26"/><rect x="13.02" y="44.42" width="0.26" height="0.26"/><rect x="12.53" y="44.95" width="0.26" height="0.26"/><rect x="12.01" y="45.47" width="0.26" height="0.26"/><rect x="11.65" y="46.09" width="0.26" height="0.26"/><rect x="11.48" y="46.81" width="0.26" height="0.26"/><rect x="11.08" y="47.40" width="0.26" height="0.26"/><rect x="10.60" y="47.94" width="0.26" height="0.26"/><rect x="10.57" y="48.74" width="0.26" height="0.26"/><rect x="9.80" y="49.12" width="0.26" height="0.26"/><rect x="9.48" y="49.75" width="0.26" height="0.26"/><rect x="9.44" y="50.55" width="0.26" height="0.26"/><rect x="8.87" y="51.04" width="0.26" height="0.26"/><rect x="8.46" y="51.62" width="0.26" height="0.26"/><rect x="8.14" y="52.26" width="0.26" height="0.26"/><rect x="8.08" y="53.05" width="0.26" height="0.26"/><rect x="7.72" y="53.66" width="0.26" height="0.26"/><rect x="7.27" y="54.22" width="0.26" height="0.26"/><rect x="6.97" y="54.87" width="0.26" height="0.26"/><rect x="6.41" y="55.37" width="0.26" height="0.26"/><rect x="6.26" y="55.36" width="0.26" height="0.26"/><rect x="6.36" y="56.12" width="0.26" height="0.26"/><rect x="6.16" y="56.87" width="0.26" height="0.26"/><rect x="6.41" y="57.62" width="0.26" height="0.26"/><rect x="6.44" y="58.38" width="0.26" height="0.26"/><rect x="6.60" y="58.26" width="0.26" height="0.26"/><rect x="6.53" y="59.12" width="0.26" height="0.26"/><rect x="7.04" y="59.64" width="0.26" height="0.26"/><rect x="7.24" y="60.34" width="0.26" height="0.26"/><rect x="7.63" y="60.93" width="0.26" height="0.26"/><rect x="8.43" y="61.27" width="0.26" height="0.26"/><rect x="8.52" y="62.04" width="0.26" height="0.26"/><rect x="8.94" y="62.60" width="0.26" height="0.26"/><rect x="9.17" y="63.29" width="0.26" height="0.26"/><rect x="9.90" y="63.68" width="0.26" height="0.26"/><rect x="9.94" y="64.47" width="0.26" height="0.26"/><rect x="10.33" y="65.06" width="0.26" height="0.26"/><rect x="10.81" y="65.59" width="0.26" height="0.26"/><rect x="11.30" y="66.12" width="0.26" height="0.26"/><rect x="11.37" y="66.89" width="0.26" height="0.26"/><rect x="12.06" y="67.30" width="0.26" height="0.26"/><rect x="12.28" y="67.99" width="0.26" height="0.26"/><rect x="12.80" y="68.50" width="0.26" height="0.26"/><rect x="13.02" y="69.19" width="0.26" height="0.26"/><rect x="13.41" y="69.78" width="0.26" height="0.26"/><rect x="13.58" y="70.50" width="0.26" height="0.26"/><rect x="13.91" y="71.12" width="0.26" height="0.26"/><rect x="14.26" y="71.73" width="0.26" height="0.26"/><rect x="14.77" y="72.24" width="0.26" height="0.26"/><rect x="14.96" y="72.95" width="0.26" height="0.26"/><rect x="15.37" y="73.53" width="0.26" height="0.26"/><rect x="15.79" y="74.10" width="0.26" height="0.26"/><rect x="16.03" y="74.77" width="0.26" height="0.26"/><rect x="16.29" y="75.44" width="0.26" height="0.26"/><rect x="16.91" y="75.89" width="0.26" height="0.26"/><rect x="17.02" y="76.64" width="0.26" height="0.26"/><rect x="17.56" y="77.14" width="0.26" height="0.26"/><rect x="18.04" y="77.67" width="0.26" height="0.26"/><rect x="18.36" y="78.31" width="0.26" height="0.26"/><rect x="18.63" y="78.96" width="0.26" height="0.26"/><rect x="19.16" y="79.46" width="0.26" height="0.26"/><rect x="19.21" y="80.26" width="0.26" height="0.26"/><rect x="19.85" y="80.69" width="0.26" height="0.26"/><rect x="20.09" y="81.37" width="0.26" height="0.26"/><rect x="20.33" y="82.05" width="0.26" height="0.26"/><rect x="20.71" y="82.64" width="0.26" height="0.26"/><rect x="21.15" y="83.20" width="0.26" height="0.26"/><rect x="21.49" y="83.82" width="0.26" height="0.26"/><rect x="21.83" y="84.43" width="0.26" height="0.26"/><rect x="22.28" y="84.98" width="0.26" height="0.26"/><rect x="22.72" y="85.54" width="0.26" height="0.26"/><rect x="22.84" y="86.29" width="0.26" height="0.26"/><rect x="23.58" y="86.67" width="0.26" height="0.26"/><rect x="23.96" y="87.26" width="0.26" height="0.26"/><rect x="24.23" y="87.92" width="0.26" height="0.26"/><rect x="24.63" y="88.50" width="0.26" height="0.26"/><rect x="24.61" y="89.33" width="0.26" height="0.26"/><rect x="25.20" y="89.80" width="0.26" height="0.26"/><rect x="25.38" y="90.51" width="0.26" height="0.26"/><rect x="25.91" y="91.01" width="0.26" height="0.26"/><rect x="26.45" y="91.52" width="0.26" height="0.26"/><rect x="26.47" y="92.32" width="0.26" height="0.26"/><rect x="26.83" y="92.93" width="0.26" height="0.26"/><rect x="27.58" y="93.30" width="0.26" height="0.26"/><rect x="27.61" y="94.10" width="0.26" height="0.26"/><rect x="28.08" y="94.64" width="0.26" height="0.26"/><rect x="28.64" y="95.13" width="0.26" height="0.26"/><rect x="28.92" y="95.78" width="0.26" height="0.26"/><rect x="29.08" y="96.51" width="0.26" height="0.26"/><rect x="29.03" y="96.75" width="0.26" height="0.26"/><rect x="29.74" y="97.00" width="0.26" height="0.26"/><rect x="30.46" y="96.96" width="0.26" height="0.26"/><rect x="31.18" y="96.96" width="0.26" height="0.26"/><rect x="31.89" y="96.75" width="0.26" height="0.26"/><rect x="32.61" y="97.13" width="0.26" height="0.26"/><rect x="33.32" y="96.96" width="0.26" height="0.26"/><rect x="34.04" y="97.05" width="0.26" height="0.26"/><rect x="34.76" y="97.01" width="0.26" height="0.26"/><rect x="35.47" y="96.83" width="0.26" height="0.26"/><rect x="36.19" y="97.08" width="0.26" height="0.26"/><rect x="36.90" y="96.88" width="0.26" height="0.26"/><rect x="37.68" y="98.55" width="0.26" height="0.26"/><rect x="38.27" y="99.16" width="0.26" height="0.26"/><rect x="38.75" y="99.82" width="0.26" height="0.26"/><rect x="38.93" y="100.62" width="0.26" height="0.26"/><rect x="40.97" y="105.28" width="0.26" height="0.26"/><rect x="41.24" y="106.01" width="0.26" height="0.26"/><rect x="42.01" y="106.24" width="0.26" height="0.26"/><rect x="42.27" y="106.99" width="0.26" height="0.26"/><rect x="42.94" y="107.05" width="0.26" height="0.26"/><rect x="43.65" y="107.11" width="0.26" height="0.26"/><rect x="44.36" y="107.21" width="0.26" height="0.26"/><rect x="45.08" y="107.48" width="0.26" height="0.26"/><rect x="45.79" y="107.39" width="0.26" height="0.26"/><rect x="46.50" y="107.28" width="0.26" height="0.26"/><rect x="47.22" y="107.28" width="0.26" height="0.26"/><rect x="47.93" y="107.54" width="0.26" height="0.26"/><rect x="48.64" y="107.16" width="0.26" height="0.26"/><rect x="49.36" y="107.50" width="0.26" height="0.26"/><rect x="50.07" y="107.26" width="0.26" height="0.26"/><rect x="50.78" y="107.45" width="0.26" height="0.26"/><rect x="51.50" y="107.52" width="0.26" height="0.26"/><rect x="52.21" y="107.29" width="0.26" height="0.26"/><rect x="52.92" y="107.15" width="0.26" height="0.26"/><rect x="53.64" y="107.18" width="0.26" height="0.26"/><rect x="54.35" y="107.18" width="0.26" height="0.26"/><rect x="55.06" y="107.09" width="0.26" height="0.26"/><rect x="55.78" y="107.29" width="0.26" height="0.26"/><rect x="56.49" y="107.42" width="0.26" height="0.26"/><rect x="57.20" y="107.26" width="0.26" height="0.26"/><rect x="57.92" y="107.61" width="0.26" height="0.26"/><rect x="58.63" y="107.60" width="0.26" height="0.26"/><rect x="59.34" y="107.50" width="0.26" height="0.26"/><rect x="60.06" y="107.51" width="0.26" height="0.26"/><rect x="60.77" y="107.22" width="0.26" height="0.26"/><rect x="61.48" y="107.49" width="0.26" height="0.26"/><rect x="62.20" y="107.06" width="0.26" height="0.26"/><rect x="62.91" y="107.04" width="0.26" height="0.26"/><rect x="63.62" y="107.07" width="0.26" height="0.26"/><rect x="64.34" y="107.22" width="0.26" height="0.26"/><rect x="65.05" y="107.47" width="0.26" height="0.26"/><rect x="65.76" y="107.05" width="0.26" height="0.26"/><rect x="66.48" y="107.26" width="0.26" height="0.26"/><rect x="67.19" y="107.39" width="0.26" height="0.26"/><rect x="67.90" y="107.54" width="0.26" height="0.26"/><rect x="68.62" y="107.37" width="0.26" height="0.26"/><rect x="69.33" y="107.18" width="0.26" height="0.26"/><rect x="70.04" y="107.08" width="0.26" height="0.26"/><rect x="70.76" y="107.34" width="0.26" height="0.26"/><rect x="39.23" y="33.90" width="0.26" height="0.26"/><rect x="39.22" y="34.91" width="0.26" height="0.26"/><rect x="39.35" y="35.91" width="0.26" height="0.26"/><rect x="39.57" y="35.80" width="0.26" height="0.26"/><rect x="40.13" y="36.43" width="0.26" height="0.26"/><rect x="40.64" y="37.09" width="0.26" height="0.26"/><rect x="40.50" y="37.14" width="0.26" height="0.26"/><rect x="41.42" y="37.94" width="0.26" height="0.26"/><rect x="41.43" y="37.72" width="0.26" height="0.26"/><rect x="42.21" y="38.00" width="0.26" height="0.26"/><rect x="42.99" y="37.81" width="0.26" height="0.26"/><rect x="43.78" y="38.10" width="0.26" height="0.26"/><rect x="61.35" y="33.40" width="0.26" height="0.26"/><rect x="61.38" y="34.27" width="0.26" height="0.26"/><rect x="61.85" y="35.05" width="0.26" height="0.26"/><rect x="61.83" y="35.92" width="0.26" height="0.26"/><rect x="61.65" y="35.99" width="0.26" height="0.26"/><rect x="62.40" y="36.58" width="0.26" height="0.26"/><rect x="62.13" y="37.51" width="0.26" height="0.26"/><rect x="62.38" y="37.48" width="0.26" height="0.26"/><rect x="63.38" y="37.72" width="0.26" height="0.26"/><rect x="40.53" y="54.43" width="0.26" height="0.26"/><rect x="39.93" y="55.03" width="0.26" height="0.26"/><rect x="39.33" y="55.63" width="0.26" height="0.26"/><rect x="39.36" y="55.70" width="0.26" height="0.26"/><rect x="39.35" y="56.45" width="0.26" height="0.26"/><rect x="39.20" y="57.21" width="0.26" height="0.26"/><rect x="39.62" y="57.96" width="0.26" height="0.26"/><rect x="39.29" y="58.71" width="0.26" height="0.26"/><rect x="39.44" y="58.69" width="0.26" height="0.26"/><rect x="39.75" y="59.39" width="0.26" height="0.26"/><rect x="40.23" y="59.91" width="0.26" height="0.26"/><rect x="40.42" y="59.69" width="0.26" height="0.26"/><rect x="41.21" y="59.63" width="0.26" height="0.26"/><rect x="41.99" y="59.96" width="0.26" height="0.26"/><rect x="42.77" y="59.98" width="0.26" height="0.26"/><rect x="62.27" y="55.07" width="0.26" height="0.26"/><rect x="61.22" y="55.85" width="0.26" height="0.26"/><rect x="61.10" y="56.03" width="0.26" height="0.26"/><rect x="61.38" y="56.93" width="0.26" height="0.26"/><rect x="61.46" y="57.82" width="0.26" height="0.26"/><rect x="61.64" y="58.71" width="0.26" height="0.26"/><rect x="61.39" y="58.68" width="0.26" height="0.26"/><rect x="62.45" y="59.07" width="0.26" height="0.26"/><rect x="62.38" y="59.35" width="0.26" height="0.26"/><rect x="63.16" y="59.28" width="0.26" height="0.26"/><rect x="63.94" y="59.48" width="0.26" height="0.26"/><rect x="64.72" y="59.33" width="0.26" height="0.26"/><rect x="83.60" y="57.27" width="0.26" height="0.26"/><rect x="84.05" y="57.82" width="0.26" height="0.26"/><rect x="84.50" y="58.38" width="0.26" height="0.26"/><rect x="84.48" y="58.39" width="0.26" height="0.26"/><rect x="84.81" y="59.07" width="0.26" height="0.26"/><rect x="85.45" y="59.44" width="0.26" height="0.26"/><rect x="43.61" y="75.42" width="0.26" height="0.26"/><rect x="42.83" y="75.45" width="0.26" height="0.26"/><rect x="42.04" y="75.27" width="0.26" height="0.26"/><rect x="41.26" y="75.56" width="0.26" height="0.26"/><rect x="41.28" y="75.33" width="0.26" height="0.26"/><rect x="40.49" y="75.69" width="0.26" height="0.26"/><rect x="39.86" y="76.24" width="0.26" height="0.26"/><rect x="39.39" y="76.96" width="0.26" height="0.26"/><rect x="39.39" y="76.99" width="0.26" height="0.26"/><rect x="39.52" y="77.69" width="0.26" height="0.26"/><rect x="39.37" y="78.40" width="0.26" height="0.26"/><rect x="39.44" y="79.10" width="0.26" height="0.26"/><rect x="39.33" y="79.80" width="0.26" height="0.26"/><rect x="39.15" y="80.51" width="0.26" height="0.26"/><rect x="39.37" y="80.65" width="0.26" height="0.26"/><rect x="40.49" y="80.64" width="0.26" height="0.26"/><rect x="63.46" y="76.50" width="0.26" height="0.26"/><rect x="62.58" y="76.55" width="0.26" height="0.26"/><rect x="61.76" y="76.73" width="0.26" height="0.26"/><rect x="61.82" y="76.97" width="0.26" height="0.26"/><rect x="61.43" y="77.59" width="0.26" height="0.26"/><rect x="61.50" y="78.38" width="0.26" height="0.26"/><rect x="61.53" y="78.33" width="0.26" height="0.26"/><rect x="61.08" y="79.06" width="0.26" height="0.26"/><rect x="61.14" y="79.78" width="0.26" height="0.26"/><rect x="61.40" y="80.51" width="0.26" height="0.26"/><rect x="61.24" y="80.64" width="0.26" height="0.26"/><rect x="61.81" y="81.07" width="0.26" height="0.26"/><rect x="62.26" y="81.63" width="0.26" height="0.26"/><rect x="86.30" y="75.27" width="0.26" height="0.26"/><rect x="85.76" y="75.74" width="0.26" height="0.26"/><rect x="85.15" y="76.13" width="0.26" height="0.26"/><rect x="85.36" y="76.35" width="0.26" height="0.26"/><rect x="84.73" y="76.72" width="0.26" height="0.26"/><rect x="84.13" y="77.13" width="0.26" height="0.26"/><rect x="84.59" y="77.40" width="0.26" height="0.26"/><rect x="84.22" y="78.28" width="0.26" height="0.26"/><rect x="83.91" y="79.19" width="0.26" height="0.26"/></g>
</svg>
<div class="a" style="left:602px;top:203px;width:1px;height:870px;background:rgba(165,165,170,0.36)"></div>
<div class="a" style="left:722px;top:203px;width:1px;height:870px;background:rgba(165,165,170,0.36)"></div>
<div class="a" style="left:841px;top:203px;width:1px;height:870px;background:rgba(165,165,170,0.36)"></div>
<div class="a" style="left:960px;top:203px;width:1px;height:870px;background:rgba(165,165,170,0.36)"></div>
<div class="a" style="left:1079px;top:203px;width:1px;height:870px;background:rgba(165,165,170,0.36)"></div>
<div class="a" style="left:1199px;top:203px;width:1px;height:870px;background:rgba(165,165,170,0.36)"></div>
<div class="a" style="left:1318px;top:203px;width:1px;height:870px;background:rgba(165,165,170,0.36)"></div>
<div class="a" style="left:1437px;top:203px;width:1px;height:870px;background:rgba(165,165,170,0.36)"></div>
<div class="a" style="left:1557px;top:203px;width:1px;height:870px;background:rgba(165,165,170,0.36)"></div>
<div class="a" style="left:540px;top:219px;width:1017px;height:1px;background:rgba(165,165,170,0.36)"></div>
<div class="a" style="left:540px;top:338px;width:1017px;height:1px;background:rgba(165,165,170,0.36)"></div>
<div class="a" style="left:540px;top:458px;width:1017px;height:1px;background:rgba(165,165,170,0.36)"></div>
<div class="a" style="left:540px;top:577px;width:1017px;height:1px;background:rgba(165,165,170,0.36)"></div>
<div class="a" style="left:540px;top:696px;width:1017px;height:1px;background:rgba(165,165,170,0.36)"></div>
<div class="a" style="left:540px;top:815px;width:1017px;height:1px;background:rgba(165,165,170,0.36)"></div>
<div class="a" style="left:540px;top:935px;width:1017px;height:1px;background:rgba(165,165,170,0.36)"></div>
<div class="a" style="left:540px;top:1054px;width:1017px;height:1px;background:rgba(165,165,170,0.36)"></div>
<div class="a" style="left:985px;top:697px;width:606px;height:1px;background:rgba(185,185,75,0.72)"></div>
<div class="a" style="left:959.5px;top:672.5px;width:2.5px;height:23.5px;background:#00f000"></div>
<div class="a" style="left:961px;top:695.5px;width:24px;height:2.5px;background:#f00"></div>
<div class="a" style="left:966px;top:695.5px;width:6px;height:3px;background:#e81e96;clip-path:polygon(0 40%,100% 0,100% 100%,0 100%)"></div>
<div class="a" style="left:959px;top:695px;width:3px;height:3px;background:#1010f0;border-radius:50%"></div>
<div class="t" style="left:950.60px;top:696px;font-size:10.87px;letter-spacing:-0.043px;color:#f0f0f0;">map</div>
<div class="a" style="left:540px;top:203px;width:1052px;height:870px;border:1px solid #1f1f1f"></div></body></html>
